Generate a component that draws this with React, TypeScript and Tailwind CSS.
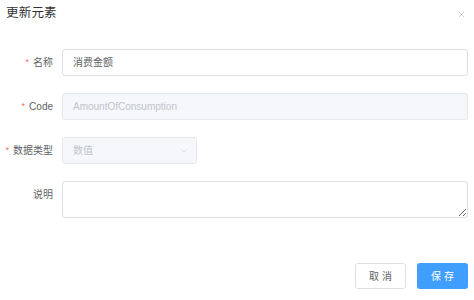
import { ChevronDown, X } from 'lucide-react'

const font = { fontFamily: '"Liberation Sans", "Noto Sans CJK SC", sans-serif' }

function Label({ text, required }: { text: string; required?: boolean }) {
  return (
    <div className="w-[53px] shrink-0 flex justify-end items-center text-[10px] text-[#606266] pr-0">
      {required && <span className="text-[#f56c6c] mr-[4px] text-[9px]">*</span>}
      {text}
    </div>
  )
}

export default function App() {
  return (
    <div className="w-[474px] h-[300px] bg-white flex flex-col" style={font}>
      <div className="flex justify-between items-start pl-[6px] pr-[8px] pt-[4px] h-[24px]">
        <span className="text-[12.5px] text-[#303133] leading-[18px] tracking-[0.2px]">更新元素</span>
        <X size={9} strokeWidth={1.5} className="text-[#a8abb2] mt-[6px]" />
      </div>

      <div className="flex flex-col pt-[25px] pr-[6px]">
        <div className="flex h-[27px] mb-[17px]">
          <Label text="名称" required />
          <div className="ml-[9px] flex-1 border border-[#dcdfe6] rounded-[3px] flex items-center px-[10px] text-[10px] text-[#606266]">
            消费金额
          </div>
        </div>

        <div className="flex h-[27px] mb-[17px]">
          <Label text="Code" required />
          <div className="ml-[9px] flex-1 border border-[#e4e7ed] bg-[#f5f7fa] rounded-[3px] flex items-center px-[10px] text-[10px] text-[#c0c4cc]">
            AmountOfConsumption
          </div>
        </div>

        <div className="flex h-[27px] mb-[17px]">
          <Label text="数据类型" required />
          <div className="ml-[9px] w-[135px] border border-[#e4e7ed] bg-[#f5f7fa] rounded-[3px] flex items-center justify-between pl-[10px] pr-[7px] text-[10px] text-[#c0c4cc]">
            数值
            <ChevronDown size={10} strokeWidth={1.5} className="text-[#c0c4cc]" />
          </div>
        </div>

        <div className="flex h-[37px]">
          <div className="w-[53px] shrink-0 flex justify-end items-start pt-[6px] text-[10px] text-[#606266]">说明</div>
          <textarea className="ml-[9px] flex-1 border border-[#dcdfe6] rounded-[3px] outline-none" />
        </div>
      </div>

      <div className="flex justify-end gap-[11px] pr-[6px] mt-[45px]">
        <button className="w-[51px] h-[26px] border border-[#dcdfe6] rounded-[3px] bg-white text-[10px] text-[#606266] tracking-[3px] pl-[3px]">
          取消
        </button>
        <button className="w-[51px] h-[26px] rounded-[3px] bg-[#409eff] text-[10px] text-white tracking-[3px] pl-[3px]">
          保存
        </button>
      </div>
    </div>
  )
}
